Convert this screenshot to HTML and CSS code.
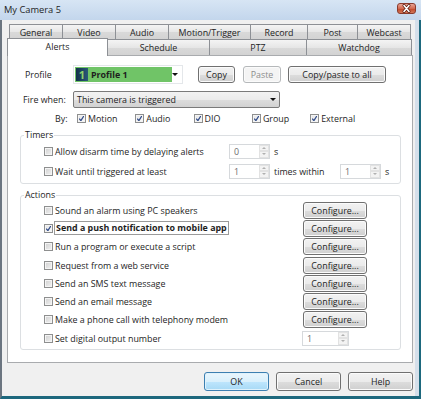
FILE: index.html
```html
<!DOCTYPE html>
<html lang="en">
<head>
    <meta charset="UTF-8">
    <title>My Camera 5</title>
    <link rel="stylesheet" href="styles.css">
</head>
<body>
    <div class="window">
        <div class="titlebar">
            <span class="title">My Camera 5</span>
            <span class="close">
                <svg width="19" height="11" viewBox="0 0 19 11">
                    <path d="M7 2.5 L12 8.5 M12 2.5 L7 8.5" stroke="#5a1a10" stroke-width="3" stroke-linecap="round"/>
                    <path d="M7 2.5 L12 8.5 M12 2.5 L7 8.5" stroke="#fff" stroke-width="1.6" stroke-linecap="round"/>
                </svg>
            </span>
        </div>
        <div class="frame">
            <div class="client">
                <div class="tabrow row1">
                    <div class="tab w-general">General</div>
                    <div class="tab w-video">Video</div>
                    <div class="tab w-audio">Audio</div>
                    <div class="tab w-motion">Motion/Trigger</div>
                    <div class="tab w-record">Record</div>
                    <div class="tab w-post">Post</div>
                    <div class="tab w-webcast">Webcast</div>
                </div>
                <div class="tabrow row2">
                    <div class="tab selected w-alerts">Alerts</div>
                    <div class="tab w-schedule">Schedule</div>
                    <div class="tab w-ptz">PTZ</div>
                    <div class="tab w-watchdog">Watchdog</div>
                </div>

                <div class="panel">
                    <div class="row profile-row">
                        <span class="label">Profile</span>
                        <div class="profile-combo">
                            <div class="profile-fill">
                                <span class="profile-icon">1</span>
                                <b>Profile 1</b>
                            </div>
                            <span class="arrow"></span>
                        </div>
                        <button class="btn copy">Copy</button>
                        <button class="btn paste" disabled>Paste</button>
                        <button class="btn copy-all">Copy/paste to all</button>
                    </div>

                    <div class="row fire-row">
                        <span class="label">Fire when:</span>
                        <div class="combo">
                            <span>This camera is triggered</span>
                            <span class="arrow"></span>
                        </div>
                    </div>

                    <div class="row by-row">
                        <span class="by-label">By:</span>
                        <label class="by-item"><span class="check on"></span>Motion</label>
                        <label class="by-item"><span class="check on"></span>Audio</label>
                        <label class="by-item"><span class="check on"></span>DIO</label>
                        <label class="by-item"><span class="check on"></span>Group</label>
                        <label class="by-item"><span class="check on"></span>External</label>
                    </div>

                    <fieldset class="group timers">
                        <legend>Timers</legend>
                        <div class="group-body">
                            <div class="timer-row">
                                <label class="opt timer-opt"><span class="check"></span>Allow disarm time by delaying alerts</label>
                                <div class="spin"><span class="spin-val">0</span><span class="spin-btns"><i class="up"></i><i class="down"></i></span></div>
                                <span class="unit">s</span>
                            </div>
                            <div class="timer-row">
                                <label class="opt timer-opt"><span class="check"></span>Wait until triggered at least</label>
                                <div class="spin"><span class="spin-val">1</span><span class="spin-btns"><i class="up"></i><i class="down"></i></span></div>
                                <span class="unit times">times within</span>
                                <div class="spin"><span class="spin-val">1</span><span class="spin-btns"><i class="up"></i><i class="down"></i></span></div>
                                <span class="unit">s</span>
                            </div>
                        </div>
                    </fieldset>

                    <fieldset class="group actions">
                        <legend>Actions</legend>
                        <div class="group-body">
                            <div class="action-row">
                                <label class="opt action-opt"><span class="check"></span>Sound an alarm using PC speakers</label>
                                <button class="btn configure">Configure...</button>
                            </div>
                            <div class="action-row">
                                <label class="opt action-opt"><span class="check on"></span><b class="focused">Send a push notification to mobile app</b></label>
                                <button class="btn configure">Configure...</button>
                            </div>
                            <div class="action-row">
                                <label class="opt action-opt"><span class="check"></span>Run a program or execute a script</label>
                                <button class="btn configure">Configure...</button>
                            </div>
                            <div class="action-row">
                                <label class="opt action-opt"><span class="check"></span>Request from a web service</label>
                                <button class="btn configure">Configure...</button>
                            </div>
                            <div class="action-row">
                                <label class="opt action-opt"><span class="check"></span>Send an SMS text message</label>
                                <button class="btn configure">Configure...</button>
                            </div>
                            <div class="action-row">
                                <label class="opt action-opt"><span class="check"></span>Send an email message</label>
                                <button class="btn configure">Configure...</button>
                            </div>
                            <div class="action-row">
                                <label class="opt action-opt"><span class="check"></span>Make a phone call with telephony modem</label>
                                <button class="btn configure">Configure...</button>
                            </div>
                            <div class="action-row">
                                <label class="opt action-opt"><span class="check"></span>Set digital output number</label>
                                <div class="spin output-spin"><span class="spin-val">1</span><span class="spin-btns"><i class="up"></i><i class="down"></i></span></div>
                            </div>
                        </div>
                    </fieldset>
                </div>

                <div class="dialog-buttons">
                    <button class="btn dlg default">OK</button>
                    <button class="btn dlg">Cancel</button>
                    <button class="btn dlg">Help</button>
                </div>
            </div>
        </div>
    </div>
</body>
</html>
```

FILE: styles.css
```css
* {
    box-sizing: border-box;
}

body {
    margin: 0;
    font-family: "Open Sans", "Segoe UI", sans-serif;
    font-size: 8.9px;
    color: #1e1e1e;
}

.window {
    width: 421px;
    height: 399px;
    overflow: hidden;
    display: flex;
    flex-direction: column;
    background: #cfdceb;
}

/* title bar */
.titlebar {
    height: 20px;
    display: flex;
    justify-content: space-between;
    align-items: flex-start;
    padding: 0 5px 0 4px;
    background: linear-gradient(#d7e5f4, #c3d6ec);
}

.title {
    font-size: 9.3px;
    line-height: 19px;
}

.close {
    margin-top: 3px;
    width: 19px;
    height: 11px;
    border: 1px solid #8a3a2c;
    border-radius: 3px;
    background: linear-gradient(#e9a597, #d2694f 50%, #c04326 51%, #d37a5a);
    display: flex;
}

.close svg {
    margin: -1px;
}

.frame {
    flex: 1;
    display: flex;
    border-left: 2px solid #6b7580;
    border-bottom: 3px solid #1d687d;
    border-right: 3px solid #1d687d;
}

.client {
    flex: 1;
    display: flex;
    flex-direction: column;
    padding: 4px 2px 0 0;
    background: #f0f0f0;
    border-right: 4px solid #d5dfea;
}

/* tabs */
.tabrow {
    display: flex;
}

.row1 {
    margin-left: 7px;
    height: 15px;
}

.row2 {
    margin-left: 5px;
    height: 16px;
    align-items: flex-end;
}

.tab {
    height: 100%;
    display: flex;
    align-items: center;
    justify-content: center;
    margin-right: -1px;
    border: 1px solid #8d9095;
    border-bottom: none;
    background: linear-gradient(#f4f4f4, #e6e6e6 50%, #d9d9d9 51%, #d3d3d3);
    white-space: nowrap;
}

.tab.selected {
    position: relative;
    z-index: 1;
    height: 18px;
    margin-bottom: -1px;
    padding-bottom: 2px;
    background: #fff;
}

.w-general { width: 54px; }
.w-video { width: 54px; }
.w-audio { width: 54px; }
.w-motion { width: 83px; }
.w-record { width: 58px; }
.w-post { width: 51px; }
.w-webcast { width: 54px; }
.w-alerts { width: 101px; }
.w-schedule { width: 103px; }
.w-ptz { width: 98px; }
.w-watchdog { width: 106px; }

/* main panel */
.panel {
    margin-left: 5px;
    width: 406px;
    height: 308px;
    border: 1px solid #a9abae;
    background: #fff;
    display: flex;
    flex-direction: column;
}

.row {
    display: flex;
    align-items: center;
}

.profile-row {
    margin-top: 9px;
    height: 19px;
    padding-left: 17px;
}

.label {
    width: 48px;
}

.profile-combo {
    width: 110px;
    height: 19px;
    border: 1px solid #e4e7ea;
    padding: 1px;
    display: flex;
    align-items: center;
}

.profile-fill {
    width: 97px;
    height: 15px;
    background: #70c467;
    display: flex;
    align-items: center;
    gap: 3px;
    padding-left: 1px;
}

.profile-icon {
    width: 12px;
    height: 13px;
    background: linear-gradient(90deg, #12304a, #2a5a78);
    color: #8fd26a;
    font-weight: bold;
    font-size: 11px;
    line-height: 13px;
    text-align: center;
}

.arrow {
    margin-left: auto;
    margin-right: 3px;
    width: 0;
    height: 0;
    border-left: 3px solid transparent;
    border-right: 3px solid transparent;
    border-top: 3px solid #111;
}

.btn {
    font: inherit;
    color: #1e1e1e;
    height: 17px;
    padding: 0;
    border: 1px solid #707070;
    border-radius: 3px;
    background: linear-gradient(#f2f2f2, #ebebeb 50%, #dddddd 51%, #cfcfcf);
    box-shadow: inset 0 0 0 1px #fbfbfb;
}

.btn:disabled {
    color: #8d8d8d;
    border-color: #b5b8ba;
    background: #f4f4f4;
}

.copy {
    margin-left: 15px;
    width: 37px;
}

.paste {
    margin-left: 8px;
    width: 38px;
}

.copy-all {
    margin-left: 7px;
    width: 98px;
}

.fire-row {
    margin-top: 7px;
    height: 17px;
    padding-left: 15px;
}

.fire-row .label {
    width: 50px;
}

.combo {
    width: 207px;
    height: 17px;
    border: 1px solid #7a7a7a;
    border-radius: 2px;
    background: linear-gradient(#f2f2f2, #ebebeb 50%, #dddddd 51%, #d2d2d2);
    display: flex;
    align-items: center;
    padding-left: 3px;
}

.by-row {
    margin-top: 4px;
    height: 12px;
    padding-left: 47px;
}

.by-label {
    width: 22px;
}

.by-item {
    width: 58.3px;
    display: flex;
    align-items: center;
}

/* checkboxes */
.check {
    flex: none;
    width: 9px;
    height: 9px;
    margin-right: 2px;
    border: 1px solid #8e8f8f;
    background: linear-gradient(135deg, #cfcfcf, #f2f2f2);
    box-shadow: inset 0 0 0 1px #f4f4f4;
}

.check.on {
    background: url("data:image/svg+xml,%3Csvg xmlns='http://www.w3.org/2000/svg' width='7' height='7'%3E%3Cpath d='M1.2 3.6 L2.9 5.6 L5.8 1' fill='none' stroke='%23344e8a' stroke-width='1.3'/%3E%3C/svg%3E") center no-repeat, linear-gradient(135deg, #e4e4e4, #fafafa);
}

/* group boxes */
.group {
    margin: 5px 0 0 12px;
    width: 381px;
    padding: 0;
    border: 1px solid #dcdfe2;
    border-radius: 3px;
}

.group legend {
    margin-left: 3px;
    padding: 0 1px;
    line-height: 12px;
}

.group-body {
    padding: 0 0 2px 23px;
}

.opt {
    display: flex;
    align-items: center;
    white-space: nowrap;
}

.timer-row {
    height: 20px;
    display: flex;
    align-items: center;
}

.timer-opt {
    width: 185px;
}

.spin {
    width: 41px;
    height: 15px;
    border: 1px solid #d6d9dc;
    display: flex;
    color: #6d6d6d;
}

.spin-val {
    flex: 1;
    padding-left: 4px;
    line-height: 13px;
}

.spin-btns {
    width: 10px;
    display: flex;
    flex-direction: column;
}

.spin-btns i {
    flex: 1;
    border: 1px solid #e2e2e2;
    background: #f3f3f3;
    display: flex;
    align-items: center;
    justify-content: center;
}

.spin-btns i::after {
    content: "";
    border-left: 2px solid transparent;
    border-right: 2px solid transparent;
}

.spin-btns .up::after {
    border-bottom: 2px solid #b0b0b0;
}

.spin-btns .down::after {
    border-top: 2px solid #b0b0b0;
}

.unit {
    margin-left: 4px;
}

.unit.times {
    width: 66px;
}

.action-row {
    height: 18.3px;
    display: flex;
    align-items: center;
}

.action-opt {
    width: 259px;
}

.focused {
    border: 1px solid #9a9a9a;
    margin-left: -1px;
    padding: 0 1px;
    line-height: 12px;
}

.configure {
    width: 64px;
}

.output-spin {
    width: 47px;
    margin-left: -1px;
}

/* bottom buttons */
.dialog-buttons {
    display: flex;
    justify-content: flex-end;
    gap: 7px;
    margin-top: 9px;
}

.dlg {
    width: 65px;
    height: 19px;
}

.dlg.default {
    border-color: #3c7fb1;
    background: linear-gradient(#eaf6fd, #d9f0fc 50%, #bee6fd 51%, #a7d9f5);
    box-shadow: inset 0 0 0 1px #dff2fc;
}
```
